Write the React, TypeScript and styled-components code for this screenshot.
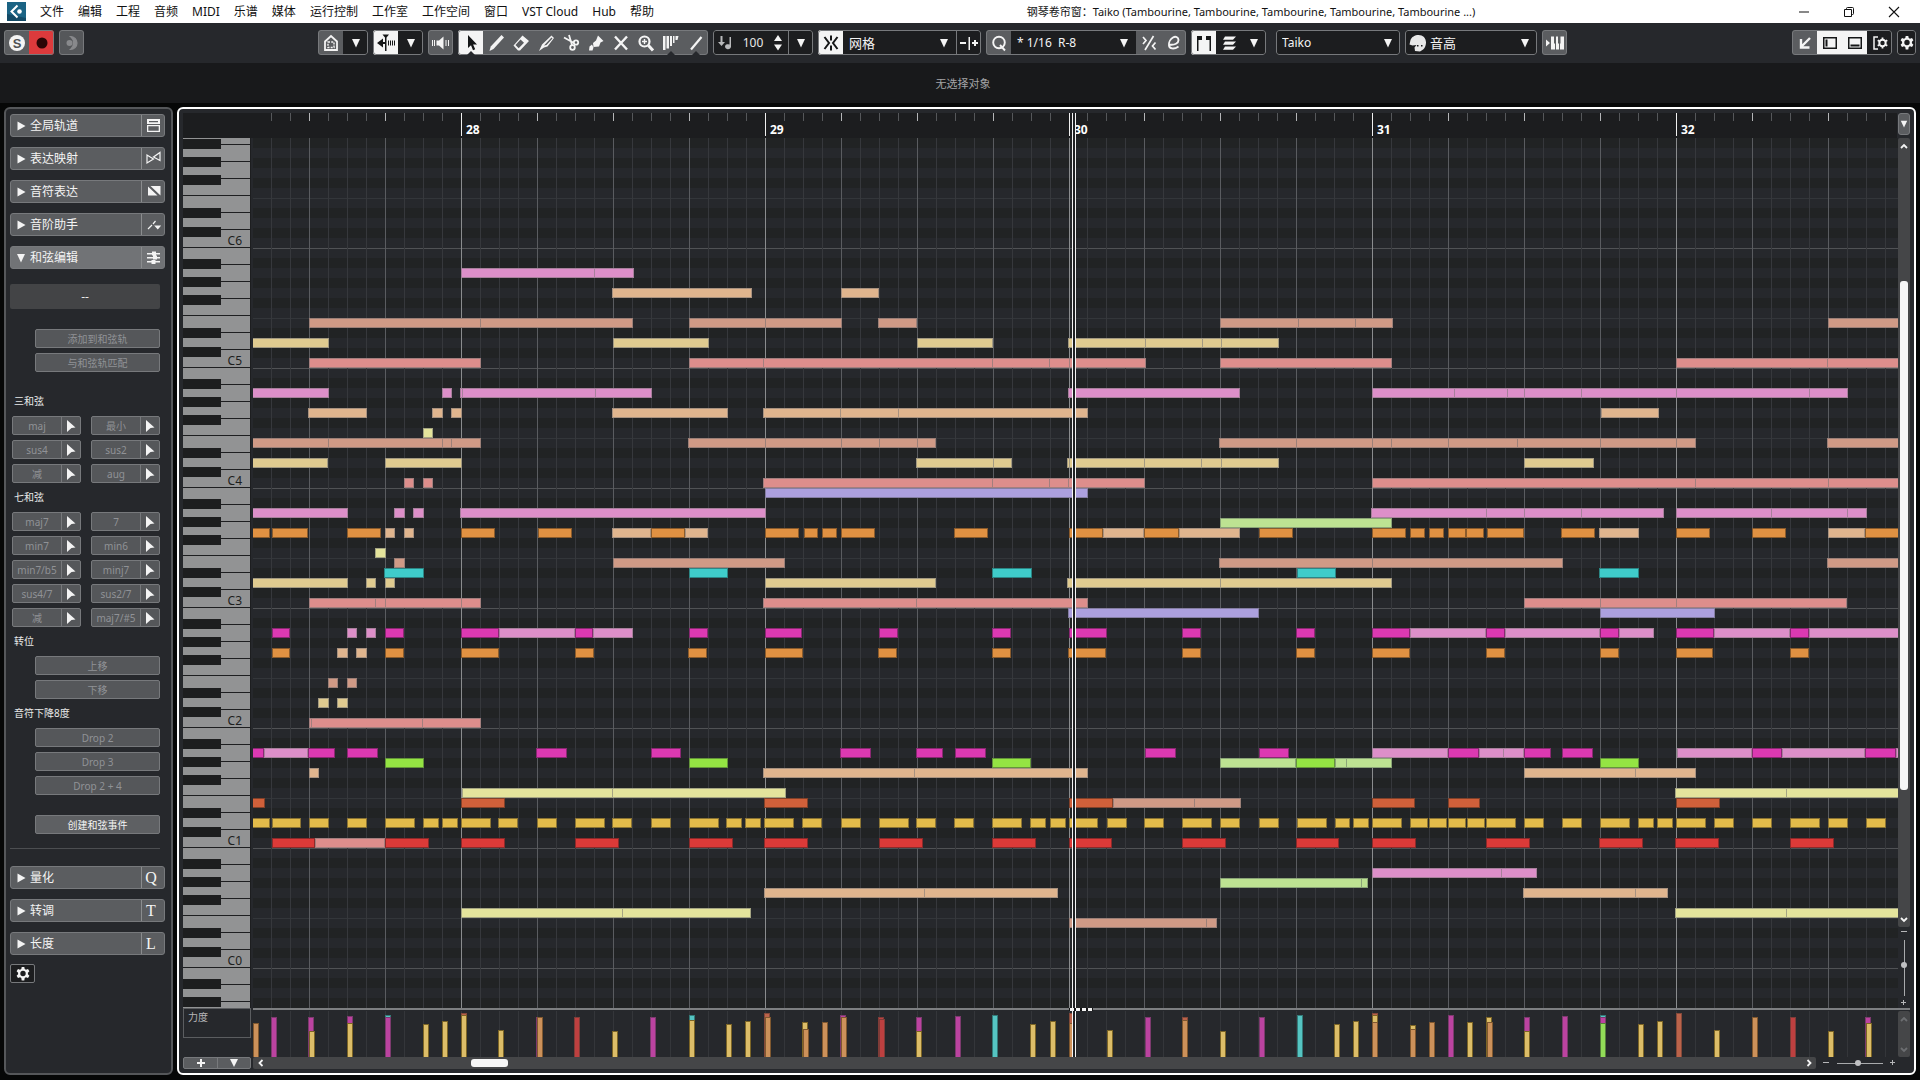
import React from 'react';
import styled, { createGlobalStyle, css } from 'styled-components';

/* ---------- theme ---------- */

const c = {
  panel: '#26282c',
  dark: '#1c1d1f',
  info: '#18191b',
  button: '#5b5d60',
  line: '#77797c',
  light: '#f4f4f4',
  text: '#e8e8e8',
  muted: '#909296',
  track: '#454648',
};

const GlobalStyle = createGlobalStyle`
  *, *::before, *::after { box-sizing: border-box; }
  body {
    margin: 0;
    background: #060707;
    color: ${c.text};
    font: 12px/16px "Noto Sans", "Noto Sans CJK SC", sans-serif;
  }
  button, input, select { font: inherit; color: inherit; margin: 0; }
  button { padding: 0; border: 0; background: none; cursor: default; }
`;

/* ---------- song data ---------- */

/* Timeline position of the left edge of the visible range, in timeline pixels. */
const VIEW_START = 253;
const BAR_28 = 461;
const STEP = 303.75 / 16;
const ROW = 10;
const LANE_BOTTOM = 1057;
const PLAYHEAD = 1072;

const noteColors: Record<string, [string, string]> = {
  P: ['#dd8fc9', '#a8809c'],
  A: ['#e0b58e', '#a89280'],
  S: ['#d09a86', '#9c8078'],
  Y: ['#e0cb90', '#a39a82'],
  R: ['#dd8e8c', '#a37f7e'],
  M: ['#dc39b2', '#8a2872'],
  O: ['#e09142', '#8a5b2c'],
  C: ['#3fccca', '#2b8685'],
  L: ['#aca0de', '#857ea3'],
  G: ['#bde292', '#8ba578'],
  B: ['#94e443', '#64953a'],
  W: ['#e4e49c', '#a5a583'],
  K: ['#d0603a', '#824129'],
  D: ['#e3bb4a', '#8b7434'],
  E: ['#dc3a38', '#8c2a2a'],
};

/* Row number and its notes: a colour letter, then the start of each note and the end of the last. */
const noteRows: [number, string][] = [
  [13, 'P461-594-634'],
  [15, 'A612-752 A841-879'],
  [18, 'S309-480-633 S689-765-842 S878-917 S1220-1298-1355-1393 S1828-2000'],
  [20, 'Y240-329 Y613-709 Y917-993 Y1068-1145-1202-1221-1279'],
  [22, 'R309-481 R689-763-992-1049-1069-1146 R1220-1392 R1676-1827-2000'],
  [25, 'P240-329 P442-452 P460-462-595-652 P1068-1240 P1372-1454-1507-1524-1581-1676-1809-1848'],
  [27, 'A308-367 A432-443 A451-462 A612-728 A763-840-898-1088 A1601-1659'],
  [29, 'W423-433'],
  [30, 'S240-328-442-451-481 S688-765-841-879-917-936 S1219-1296-1372-1391-1448-1517-1600-1676-1696 S1827-2000'],
  [32, 'Y240-328 Y385-462 Y916-993-1012 Y1067-1069-1144-1201-1221-1279 Y1524-1594'],
  [34, 'R404-414 R423-433 R763-992-1049-1068-1145 R1372-1695-1828-2000'],
  [35, 'L765-1088'],
  [37, 'P240-348 P394-405 P413-424 P460-766 P1371-1486-1524-1581-1664 P1676-1771-1847-1867'],
  [38, 'G1220-1392'],
  [39, 'O240-270 O272-308 O347-381 A385-395 A404-414 O461-495 O538-572 A612-651 O651-685 A685-708 O765-799 O804-818 O822-837 O841-875 O954-988 O1069-1103 A1103-1144 O1144-1179 A1179-1240 O1259-1293 O1372-1406 O1410-1425 O1429-1444 O1448-1466 O1466-1484 O1487-1524 O1561-1595 A1599-1639 O1676-1710 O1752-1786 A1828-1865 O1865-2000'],
  [41, 'W375-386'],
  [42, 'S394-405 S613-785 S1219-1372-1563 S1827-2000'],
  [43, 'C384-424 C689-728 C992-1032 C1297-1336 C1599-1639'],
  [44, 'Y240-348 Y366-376 Y385-395 Y765-936 Y1067-1220-1392'],
  [46, 'R309-375-385-461-481 R763-916-1088 R1524-1600-1676-1847'],
  [47, 'L1068-1259 L1600-1715'],
  [49, 'M272-290 P347-357 P366-376 M385-404 M461-499 P499-575 M575-593 P593-633 M689-708 M765-802 M879-898 M992-1011 M1069-1107 M1182-1201 M1296-1315 M1372-1410 P1410-1486 M1486-1505 P1505-1600 M1600-1619 P1619-1654 M1676-1714 P1714-1790 M1790-1809 P1809-2000'],
  [51, 'O272-290 A337-348 A356-367 O385-404 O461-499 O575-594 O688-707 O765-803 O878-897 O992-1011 O1068-1106 O1182-1201 O1296-1315 O1372-1410 O1486-1505 O1600-1619 O1676-1713 O1790-1809'],
  [54, 'S328-338 S347-357'],
  [56, 'Y318-329 Y337-348'],
  [58, 'R309-311-422-481'],
  [61, 'M240-264 P264-308 M308-335 M347-378 M536-567 M651-681 M840-871 M916-943 M955-986 M1145-1176 M1259-1289 P1372-1448 M1448-1479 P1479-1503-1524 M1524-1551 M1562-1593 P1677-1752 M1752-1782 P1782-1865 M1865-1896 P1896-2000'],
  [62, 'B385-424 B689-728 B992-1031 G1220-1296 B1296-1335 G1335-1346-1392 B1600-1639'],
  [63, 'A309-319 A763-914-1088 A1524-1635-1696'],
  [65, 'W462-612-786 W1675-1786-2000'],
  [66, 'K240-265 K461-505 K764-808 K1069-1113 S1113-1194-1241 K1372-1415 K1448-1480 K1676-1720'],
  [68, 'D240-270 D272-301 D309-329 D347-367 D385-415 D423-439 D442-458 D461-491 D498-518 D537-557 D575-605 D612-632 D651-671 D689-719 D726-742 D745-761 D764-794 D802-822 D841-861 D879-909 D916-936 D954-974 D992-1022 D1030-1046 D1050-1066 D1069-1098 D1107-1127 D1144-1164 D1182-1212 D1220-1240 D1259-1279 D1297-1327 D1335-1350 D1353-1369 D1372-1402 D1410-1428 D1429-1447 D1448-1466 D1467-1485 D1486-1516 D1524-1544 D1562-1582 D1600-1630 D1638-1654 D1657-1673 D1676-1706 D1714-1734 D1752-1772 D1790-1820 D1828-1848 D1866-1886'],
  [70, 'E272-315 R315-385 E385-429 E461-505 E575-619 E689-733 E764-808 E879-923 E992-1036 E1069-1112 E1182-1226 E1296-1339 E1372-1416 E1486-1530 E1599-1643 E1675-1719 E1790-1834'],
  [73, 'P1372-1501-1537'],
  [74, 'G1220-1361-1368'],
  [75, 'A764-924-1058 A1523-1635-1668'],
  [77, 'W461-622-751 W1675-1786-2000'],
  [78, 'S1069-1206-1217'],
];

/* A note that runs into the next one overlaps it by its border, so that a single line divides them. */
const notes = noteRows.flatMap(([row, line]) =>
  line.split(' ').flatMap((token) => {
    const edges = token.slice(1).split('-').map(Number);
    return edges.slice(1).map((end, i) => {
      const last = i === edges.length - 2;
      return { row, color: token[0], start: edges[i], width: end - edges[i] + (last ? 0 : 1) };
    });
  }),
);

const laneColors: Record<string, [string, string]> = {
  O: ['#cc915a', '#80582f'],
  M: ['#bb43a0', '#7c3a6e'],
  D: ['#dcbd68', '#7c6526'],
  E: ['#bd4040', '#7f3c38'],
  K: ['#bb634a', '#84493a'],
  C: ['#55c4c2', '#337a78'],
  B: ['#92dc58', '#55803a'],
};

/* Colour letter, position and top of each velocity bar; later bars lie over earlier ones. */
const velocities =
  'O253,1023 M271,1017 M308,1017 D309,1031 M347,1016 D347,1023 C385,1015 M385,1017 D423,1024 D442,1021 K461,1013 D461,1015 D498,1030 M536,1017 O537,1017 E574,1017 D612,1031 M650,1017 C689,1015 D689,1020 D726,1024 D745,1021 K764,1013 O765,1017 D802,1022 O803,1029 O822,1022 M840,1015 O841,1017 E878,1017 E879,1019 M916,1017 D916,1031 M955,1016 C992,1015 D1030,1024 D1050,1021 K1069,1013 O1069,1023 D1107,1030 M1145,1017 K1182,1017 O1182,1020 D1220,1031 M1259,1017 C1297,1015 D1334,1024 D1353,1021 K1372,1013 D1372,1015 O1372,1022 D1410,1025 O1410,1029 O1429,1022 M1448,1015 D1467,1022 D1486,1017 O1487,1022 M1524,1017 D1524,1031 M1562,1016 C1600,1015 M1600,1017 B1600,1023 D1638,1024 D1657,1021 K1676,1013 D1714,1030 O1752,1017 E1790,1017 D1828,1031 M1865,1017 D1866,1023'
    .split(' ')
    .map((token) => {
      const [x, top] = token.slice(1).split(',').map(Number);
      return { color: token[0], x, top };
    });

const gridLines = Array.from({ length: 86 }, (_, i) => {
  const n = i - 10;
  const kind = n % 16 === 0 ? 'bar' : n % 4 === 0 ? 'beat' : 'step';
  return { x: Math.round(BAR_28 + n * STEP) - VIEW_START, kind, bar: 28 + n / 16 };
});

/* ---------- shared parts ---------- */

const Svg = styled.svg<{ $w?: number; $h?: number }>`
  display: block;
  flex: none;
  width: ${(p) => p.$w ?? 20}px;
  height: ${(p) => p.$h ?? 20}px;
`;

type IconProps = { children: React.ReactNode; w?: number; h?: number };
const Icon = ({ children, w = 20, h = 20 }: IconProps) => (
  <Svg $w={w} $h={h} viewBox={`0 0 ${w} ${h}`} fill="currentColor" stroke="none" aria-hidden="true">
    {children}
  </Svg>
);

const Down = () => (
  <Icon w={10} h={10}>
    <path d="M1 1h8L5 9.500z" />
  </Icon>
);
const Right = () => (
  <Icon w={10} h={10}>
    <path d="M1.500 .5v9L9.500 5z" />
  </Icon>
);
const Gear = () => (
  <Icon w={14} h={14}>
    <path
      fillRule="evenodd"
      d="M5.700 0h2.600l.4 2 1.300.8 2-.8 1.400 2.300-1.500 1.400v1.600l1.500 1.400L12 11l-2-.8-1.300.8-.4 2.500H5.700L5.300 11 4 10.200 2 11 .6 8.700l1.500-1.400V5.700L.6 4.300 2 2l2 .8L5.300 2zM7 3.800a2.700 2.700 0 1 0 0 5.400 2.700 2.700 0 0 0 0-5.400z"
    />
  </Icon>
);

/* ---------- menu bar ---------- */

const Page = styled.div`
  display: grid;
  grid-template-columns: minmax(0, 1fr);
  grid-template-rows: 23px 40px 40px minmax(0, 1fr);
  height: 100vh;
  min-height: 1000px;
`;

const MenuBar = styled.header`
  display: flex;
  align-items: center;
  justify-content: space-between;
  padding: 0 20px 0 7px;
  background: #fff;
  color: #111;
`;

const Menus = styled.nav`
  display: flex;
  align-items: center;
  gap: 14px;
`;

const MenuButton = styled.button`
  height: 22px;
  white-space: nowrap;
`;

const WindowTitle = styled.h1`
  margin: 0 0 0 50px;
  font-size: 11px;
  font-weight: 400;
  white-space: nowrap;
`;

const WindowButtons = styled.div`
  display: flex;
  gap: 33px;
`;

const menus = ['文件', '编辑', '工程', '音频', 'MIDI', '乐谱', '媒体', '运行控制', '工作室', '工作空间', '窗口', 'VST Cloud', 'Hub', '帮助'];

const Logo = () => (
  <Svg $w={19} $h={19} viewBox="0 0 19 19" aria-hidden="true">
    <rect width="19" height="19" fill="#1b6384" />
    <path d="M0 12l19 4v3H0z" fill="#134a66" />
    <path d="M10.500 3.500L4.500 9.500l6 6" fill="none" stroke="#fff" strokeWidth="2" />
    <circle cx="12.500" cy="9.500" r="2.300" fill="#fff" />
  </Svg>
);

/* ---------- toolbar ---------- */

const Toolbar = styled.div`
  display: flex;
  align-items: flex-start;
  justify-content: space-between;
  padding: 7px 4px 0;
  background: ${c.panel};
`;

const ToolbarPart = styled.div<{ $indent?: boolean }>`
  display: flex;
  gap: 5px;
  margin-left: ${(p) => (p.$indent ? 9 : 0)}px;
`;

const Group = styled.div<{ $width?: number; $gapBefore?: boolean }>`
  display: flex;
  position: relative;
  width: ${(p) => (p.$width ? `${p.$width}px` : 'auto')};
  height: 25px;
  margin-left: ${(p) => (p.$gapBefore ? 5 : 0)}px;
  background: ${c.dark};
  border-radius: 3px;
  overflow: hidden;
  &::after {
    content: '';
    position: absolute;
    inset: 0;
    border: 1px solid ${c.line};
    border-radius: 3px;
    pointer-events: none;
  }
`;

const tones = {
  grey: css`background: ${c.button}; color: ${c.light};`,
  dark: css`background: ${c.dark}; color: ${c.light};`,
  white: css`background: ${c.light}; color: #151617;`,
  red: css`background: #dc3a3c; color: #2a0606;`,
  off: css`background: #55575a; color: #88898c;`,
};

const ToolButton = styled.button<{ $tone?: keyof typeof tones; $width?: number; $divided?: boolean; $marked?: boolean }>`
  display: flex;
  flex: none;
  align-items: center;
  justify-content: center;
  position: relative;
  width: ${(p) => p.$width ?? 25}px;
  height: 25px;
  border-left: ${(p) => (p.$divided ? `1px solid ${c.line}` : '0')};
  ${(p) => tones[p.$tone ?? 'grey']}
  ${(p) =>
    p.$marked &&
    css`
      &::after {
        content: '';
        position: absolute;
        z-index: 1;
        bottom: 0;
        left: 9px;
        border: solid transparent;
        border-width: 0 4px 4px;
        border-bottom-color: ${c.panel};
      }
    `}
`;

const SelectBox = styled.div`
  display: flex;
  align-items: center;
  position: relative;
  flex: 1;
  color: ${c.light};
  svg {
    position: absolute;
    right: 7px;
    pointer-events: none;
  }
`;

const Select = styled.select<{ $indent?: number; $small?: boolean }>`
  appearance: none;
  width: 100%;
  height: 25px;
  padding: 0 20px 0 ${(p) => p.$indent ?? 6}px;
  border: 0;
  background: transparent;
  color: ${c.light};
  font-size: ${(p) => (p.$small ? 12 : 13)}px;
  white-space: pre;
`;

const VelocityInput = styled.input`
  width: 30px;
  height: 25px;
  padding: 0;
  border: 0;
  background: transparent;
  text-align: center;
`;

const Fill = styled.span<{ $width: number }>`
  display: flex;
  flex: none;
  align-items: center;
  justify-content: center;
  width: ${(p) => p.$width}px;
`;

const SelectLead = styled.span`
  display: flex;
  align-items: center;
  flex: none;
  padding-left: 4px;
`;

const tools: { name: string; marked?: boolean; icon: React.ReactNode }[] = [
  { name: '对象选择', marked: true, icon: <path d="M7 2v13l3-2.800 2 5 2.200-1-2.100-4.700H16z" /> },
  { name: '绘制', icon: <path d="M15.500 2l2.500 2.500L7.500 16 3.500 18l1.200-4.500z" /> },
  { name: '擦除', icon: <path fillRule="evenodd" d="M11.500 2.500L18 8 9 17.500H7L2.500 12.500zM9.500 6.500L4.500 12l3.200 3.300 5.300-5.500z" /> },
  { name: '修剪', icon: <path fillRule="evenodd" d="M15.500 2.500L18 5l-6.500 8.500L8 14.500l-5 3.500 3-6.500zM15.500 4.500L8 12.500l2.500-.5 6-6.500z" /> },
  {
    name: '分割',
    icon: (
      <g fill="none" stroke="currentColor" strokeWidth="1.800">
        <path d="M3 4.500l10 5.500M8 2l3 10" />
        <circle cx="15" cy="9.500" r="2.200" />
        <circle cx="11.500" cy="14.500" r="2.300" />
      </g>
    ),
  },
  { name: '粘合', icon: <path d="M12 2.500l5.500 5.500-3 1.500-1.500 4-5.500.5-.5-4 3-2.500zM3.500 13.500l2.500-2 1.500 3-1 3H3z" /> },
  { name: '静音', icon: <path d="M4 3.500l12 13M16 3.500l-12 13" stroke="currentColor" strokeWidth="2.400" /> },
  {
    name: '缩放',
    icon: (
      <g fill="none" stroke="currentColor">
        <circle cx="8.500" cy="8.500" r="5" strokeWidth="2.200" />
        <path d="M12.500 12.500L17 17.500" strokeWidth="3" />
        <path d="M6 8.500h5M8.500 6v5" strokeWidth="1.400" />
      </g>
    ),
  },
  { name: '时间扭曲', marked: true, icon: <path d="M2 3h2.500v14H2zM5.500 3h2.500v12.500H5.500zM9 3h2v10H9zM12 3h1.500v7H12zM14.500 3h3l-1 4h-2z" /> },
  { name: '直线', marked: true, icon: <path d="M15.500 4L5 16.500" stroke="currentColor" strokeWidth="2.200" /> },
];

const TopToolbar = () => (
  <Toolbar>
    <ToolbarPart>
      <Group>
        <ToolButton aria-label="独奏编辑器">
          <Icon>
            <circle cx="10" cy="10" r="8" />
            <text x="10" y="14.500" textAnchor="middle" fontSize="13" fontWeight="700" fill="#505255" fontFamily="Liberation Sans, sans-serif">
              S
            </text>
          </Icon>
        </ToolButton>
        <ToolButton $tone="red" aria-label="在编辑器中录音">
          <Icon>
            <circle cx="10" cy="10" r="5.500" />
          </Icon>
        </ToolButton>
      </Group>
      <Group>
        <ToolButton $tone="off" aria-label="回溯录音">
          <Icon>
            <circle cx="7.500" cy="10" r="3" />
            <path d="M8.500 3.500a6.500 6.500 0 0 1 0 13c4-3 4-10 0-13z" stroke="currentColor" strokeWidth="1.200" />
          </Icon>
        </ToolButton>
      </Group>
    </ToolbarPart>

    <ToolbarPart $indent>
      <Group>
        <ToolButton aria-label="定义静态视图">
          <Icon>
            <path d="M4 8.500L10 3l6 5.500V17H4z" fill="none" stroke="currentColor" strokeWidth="1.800" />
            <path d="M7 9h6v5.500H7z" fill="none" stroke="currentColor" strokeWidth="1.400" strokeDasharray="2 1.200" />
          </Icon>
        </ToolButton>
        <ToolButton $tone="dark" aria-label="视图选项">
          <Down />
        </ToolButton>
      </Group>
      <Group>
        <ToolButton $tone="white" aria-label="自动滚动">
          <Icon>
            <path d="M1 10l6-4.500v9zM6 9h3v2H6zM9 3h1.500v15H9zM6.500 1.500h6.500L9.800 5.500zM12 7.500h1v5h-1zM14 7.500h1v5h-1zM16 7.500h1v5h-1zM18 7.500h1v5h-1z" />
          </Icon>
        </ToolButton>
        <ToolButton $tone="dark" aria-label="自动滚动设置">
          <Down />
        </ToolButton>
      </Group>
      <Group>
        <ToolButton aria-label="音响反馈">
          <Icon>
            <path d="M5.500 7.500H8L12.500 3.500v13L8 12.500H5.500zM1 7h1v6H1zM3 7h1v6H3zM14.500 7h1v6h-1zM17 7h1v6h-1z" />
          </Icon>
        </ToolButton>
      </Group>
      <Group>
        {tools.map((t, i) => (
          <ToolButton key={t.name} $tone={i === 0 ? 'white' : 'grey'} $marked={t.marked} aria-label={t.name}>
            <Icon>{t.icon}</Icon>
          </ToolButton>
        ))}
      </Group>
      <Group $width={100}>
        <Fill $width={25}>
          <Icon>
            <path d="M4.500 3h2v6h2.500l-3.500 4L2 9h2.500z" fill="#b9babc" />
            <path d="M13.500 4h1.500v9.500a3 2.500 0 1 1-1.500-2z" fill="#b9babc" />
          </Icon>
        </Fill>
        <VelocityInput aria-label="插入力度" defaultValue="100" />
        <ToolButton $tone="dark" $width={20} aria-label="调整力度">
          <Icon w={10} h={18}>
            <path d="M1 7l4-6 4 6zM1 10.500h8L5 16.500z" />
          </Icon>
        </ToolButton>
        <ToolButton $tone="dark" $divided aria-label="力度预设">
          <Down />
        </ToolButton>
      </Group>
      <Group $width={163}>
        <ToolButton $tone="white" aria-label="吸附">
          <Icon>
            <path d="M9 2.500h2v5H9zM9 12.500h2v5H9z" />
            <path d="M3.500 4L8 10l-4.500 6M16.500 4L12 10l4.500 6" fill="none" stroke="currentColor" strokeWidth="2" />
          </Icon>
        </ToolButton>
        <SelectBox>
          <Select aria-label="吸附类型">
            <option>网格</option>
          </Select>
          <Down />
        </SelectBox>
        <ToolButton $tone="dark" $divided aria-label="相对网格">
          <Icon>
            <path d="M1 9h6v2H1zM9.500 4h1.500v13H9.500zM13 9h6v2h-6zM15 7h2v6h-2z" />
          </Icon>
        </ToolButton>
      </Group>
      <Group $width={200}>
        <ToolButton aria-label="应用量化">
          <Icon>
            <circle cx="10" cy="9.500" r="5.800" fill="none" stroke="currentColor" strokeWidth="1.900" />
            <path d="M11 12l5 5.500" stroke="currentColor" strokeWidth="1.900" />
          </Icon>
        </ToolButton>
        <SelectBox>
          <Select aria-label="量化预设" $small>
            <option>* 1/16&nbsp; R-8</option>
          </Select>
          <Down />
        </SelectBox>
        <ToolButton aria-label="柔和量化">
          <Icon>
            <path d="M14.500 3L6 17M4 4l3 3.500L4 11M16.500 9.500L13.500 13l3 3.500" fill="none" stroke="currentColor" strokeWidth="1.700" />
          </Icon>
        </ToolButton>
        <ToolButton aria-label="打开量化面板">
          <Icon>
            <path d="M5 11.500c6 1 9.500-1.500 9.500-4.500 0-3-3-4-5.500-2.500S4.500 9.500 5 12.500s4.500 4.500 9.500 1" fill="none" stroke="currentColor" strokeWidth="1.900" />
          </Icon>
        </ToolButton>
      </Group>
      <Group>
        <ToolButton $tone="white" aria-label="显示片段边界">
          <Icon>
            <path d="M3 3h5v4H4.500v11H3zM17 3h-5v4h3.500v11H17z" />
          </Icon>
        </ToolButton>
        <ToolButton $tone="dark" aria-label="编辑激活片段">
          <Icon>
            <path d="M6 3.500h11l-3 3.200H4zM6 8.500h11l-3 3.200H4zM6 13.500h11l-3 3.200H4z" />
          </Icon>
        </ToolButton>
        <ToolButton $tone="dark" aria-label="片段选项">
          <Down />
        </ToolButton>
      </Group>
      <Group $width={124} $gapBefore>
        <SelectBox>
          <Select aria-label="当前片段" $small>
            <option>Taiko</option>
          </Select>
          <Down />
        </SelectBox>
      </Group>
      <Group $width={132}>
        <SelectLead>
          <Icon w={18} h={18}>
            <path fillRule="evenodd" d="M9.500 1C14 1 17 4 17 8.500S14.500 16 11 17.500L6 17l-.5-3.500 2-2.500-4 .5L.5 10.500 1.500 6C2.500 3 6 1 9.500 1zM8 11v1.500h1.500V11zM12 11v1.500h1.500V11z" />
          </Icon>
        </SelectLead>
        <SelectBox>
          <Select aria-label="事件颜色" $indent={3}>
            <option>音高</option>
          </Select>
          <Down />
        </SelectBox>
      </Group>
      <Group>
        <ToolButton aria-label="MIDI 输入">
          <Icon>
            <path d="M1 6.500v7l4-3.500zM6 3.500h3v7h1v6H6zM11 3.500h2v7h1v6h-3v-6zM15.500 3.500H19v13h-4v-6h.5z" />
          </Icon>
        </ToolButton>
      </Group>
    </ToolbarPart>

    <ToolbarPart>
      <Group $width={100}>
        <ToolButton aria-label="在下部区域打开">
          <Icon>
            <path d="M15 5L7 13M6 6v8.500h8.500" fill="none" stroke="currentColor" strokeWidth="2.400" />
          </Icon>
        </ToolButton>
        <ToolButton $tone="white" aria-label="显示左侧区域">
          <Icon>
            <path fillRule="evenodd" d="M3 4h14v12H3zM4.500 5.500v9h11v-9zM5.500 6.500h2v7h-2z" />
          </Icon>
        </ToolButton>
        <ToolButton $tone="white" aria-label="显示下部区域">
          <Icon>
            <path fillRule="evenodd" d="M3 4h14v12H3zM4.500 5.500v9h11v-9zM5.500 11.500h9v2h-9z" />
          </Icon>
        </ToolButton>
        <ToolButton $tone="dark" aria-label="设置窗口布局">
          <Icon>
            <path d="M8 4H4v12h4" fill="none" stroke="currentColor" strokeWidth="1.500" />
            <circle cx="12.500" cy="10" r="3.200" fill="none" stroke="currentColor" strokeWidth="2" />
            <path d="M12.500 4.500v2M12.500 13.500v2M7.700 7.200l1.800 1M15.500 11.800l1.800 1M7.700 12.800l1.800-1M15.500 8.200l1.800-1" stroke="currentColor" strokeWidth="1.800" />
          </Icon>
        </ToolButton>
      </Group>
      <Group $width={19}>
        <ToolButton $tone="dark" $width={19} aria-label="设置工具栏">
          <Gear />
        </ToolButton>
      </Group>
    </ToolbarPart>
  </Toolbar>
);

const InfoLine = styled.div`
  display: flex;
  align-items: center;
  justify-content: center;
  padding: 2px 0 0 6px;
  background: ${c.info};
  color: #a4a5a7;
  font-size: 11px;
`;

/* ---------- inspector ---------- */

const Workspace = styled.main`
  display: grid;
  grid-template-columns: 169px minmax(0, 1fr);
  gap: 4px;
  min-height: 0;
  padding: 4px 4px 5px;
`;

const Inspector = styled.aside`
  border: 2px solid #55575a;
  border-radius: 6px;
  padding: 5px 6px 0 4px;
  background: ${c.panel};
  overflow: hidden;
`;

const Sections = styled.div`
  display: grid;
  gap: 10px;
`;

const SectionButton = styled.button<{ $open?: boolean }>`
  display: grid;
  grid-template-columns: 14px 1fr 23px;
  align-items: center;
  height: 23px;
  border: 1px solid ${c.line};
  border-radius: 3px;
  background: ${(p) => (p.$open ? '#717376' : c.button)};
  color: ${c.light};
  text-align: left;
  padding-left: 5px;
`;

const SectionMark = styled.span<{ $letter?: boolean }>`
  display: flex;
  align-items: center;
  justify-content: center;
  height: 21px;
  border-left: 1px solid #8a8c8e;
  ${(p) => p.$letter && css`font: 16px/20px "Liberation Serif", serif; padding-right: 4px;`}
`;

const ChordBody = styled.div`
  padding: 15px 5px 17px 0;
`;

const ChordName = styled.output`
  display: block;
  height: 25px;
  border-radius: 2px;
  background: #434446;
  line-height: 25px;
  text-align: center;
`;

const Stack = styled.div<{ $top?: number }>`
  display: grid;
  gap: 5px;
  margin: ${(p) => p.$top ?? 0}px 0 0 25px;
`;

const PanelButton = styled.button<{ $active?: boolean }>`
  height: 19px;
  border: 1px solid ${c.line};
  border-radius: 2px;
  background: ${(p) => (p.$active ? '#5e6063' : '#55575a')};
  color: ${(p) => (p.$active ? c.light : c.muted)};
  font-size: 10px;
  line-height: 14px;
`;

const Heading = styled.h2<{ $top?: number }>`
  margin: ${(p) => p.$top ?? 7}px 0 7px 4px;
  font-size: 10px;
  font-weight: 400;
  line-height: 15px;
`;

const ChordGrid = styled.div`
  display: grid;
  grid-template-columns: 1fr 1fr;
  gap: 5px 10px;
  padding-left: 2px;
`;

const ChordPair = styled.div`
  display: grid;
  grid-template-columns: 1fr 19px;
  height: 19px;
  border: 1px solid ${c.line};
  border-radius: 2px;
  background: #55575a;
`;

const ChordButton = styled.button`
  color: ${c.muted};
  font-size: 10px;
  line-height: 14px;
`;

const AuditionButton = styled.button`
  display: flex;
  align-items: center;
  justify-content: center;
  border-left: 1px solid ${c.line};
  color: ${c.light};
`;

const Rule = styled.hr`
  margin: 14px 0 0;
  border: 0;
  border-top: 1px solid #4c4e51;
`;

const SettingsButton = styled.button`
  display: flex;
  align-items: center;
  justify-content: center;
  width: 25px;
  height: 19px;
  margin-top: 9px;
  border: 1px solid ${c.line};
  border-radius: 2px;
  background: ${c.dark};
  color: ${c.light};
`;

const sections: { name: string; open?: boolean; icon: React.ReactNode }[] = [
  { name: '全局轨道', icon: <path fillRule="evenodd" d="M1 1h13v5H1zM3 3v1.200h9V3zM1 7h13v7H1zM2.300 8.300v4.400h10.400V8.300z" /> },
  { name: '表达映射', icon: <path d="M1 4v8l6.500-4zM14 1.500v8L7.500 6z" fill="none" stroke="currentColor" strokeWidth="1.200" /> },
  { name: '音符表达', icon: <path d="M4.500 2h10v9.500zM2 2.500v9h9.500z" /> },
  { name: '音阶助手', icon: <path d="M2 12l2-2 2-2M7 7l2.500-3M9.500 9h4.500l-2.200 2.500z" stroke="currentColor" strokeWidth="1.200" /> },
  { name: '和弦编辑', open: true, icon: <path d="M1 3h13v1.500H1zM1 7h13v1.500H1zM1 11h13v1.500H1zM6 1.500h4v4H6zM7 5.500h4V9.500H7zM5.500 10h4v4h-4z" /> },
];

const Chords = ({ names }: { names: string[] }) => (
  <ChordGrid>
    {names.map((name, i) => (
      <ChordPair key={i}>
        <ChordButton>{name}</ChordButton>
        <AuditionButton aria-label={`选择 ${name}`}>
          <Icon w={10} h={12}>
            <path d="M1 0l8.500 7.500-4 .5L1 12z" />
          </Icon>
        </AuditionButton>
      </ChordPair>
    ))}
  </ChordGrid>
);

const InspectorPanel = () => (
  <Inspector>
    <Sections>
      {sections.map((s) => (
        <SectionButton key={s.name} $open={s.open} aria-expanded={!!s.open}>
          {s.open ? <Down /> : <Right />}
          {s.name}
          <SectionMark>
            <Icon w={15} h={15}>{s.icon}</Icon>
          </SectionMark>
        </SectionButton>
      ))}
    </Sections>
    <ChordBody>
      <ChordName>--</ChordName>
      <Stack $top={20}>
        <PanelButton>添加到和弦轨</PanelButton>
        <PanelButton>与和弦轨匹配</PanelButton>
      </Stack>
      <Heading $top={22}>三和弦</Heading>
      <Chords names={['maj', '最小', 'sus4', 'sus2', '减', 'aug']} />
      <Heading>七和弦</Heading>
      <Chords names={['maj7', '7', 'min7', 'min6', 'min7/b5', 'minj7', 'sus4/7', 'sus2/7', '减', 'maj7/#5']} />
      <Heading>转位</Heading>
      <Stack>
        <PanelButton>上移</PanelButton>
        <PanelButton>下移</PanelButton>
      </Stack>
      <Heading>音符下降8度</Heading>
      <Stack>
        <PanelButton>Drop 2</PanelButton>
        <PanelButton>Drop 3</PanelButton>
        <PanelButton>Drop 2 + 4</PanelButton>
      </Stack>
      <Stack $top={20}>
        <PanelButton $active>创建和弦事件</PanelButton>
      </Stack>
      <Rule />
    </ChordBody>
    <Sections>
      {[
        ['量化', 'Q'],
        ['转调', 'T'],
        ['长度', 'L'],
      ].map(([name, mark]) => (
        <SectionButton key={name} aria-expanded={false}>
          <Right />
          {name}
          <SectionMark $letter>{mark}</SectionMark>
        </SectionButton>
      ))}
    </Sections>
    <SettingsButton aria-label="设置检查器">
      <Gear />
    </SettingsButton>
  </Inspector>
);

/* ---------- editor ---------- */

const Editor = styled.section`
  display: grid;
  grid-template-columns: 68px minmax(0, 1fr) 12px;
  grid-template-rows: 25px minmax(0, 1fr) 3px 46px 12px;
  min-height: 0;
  padding: 4px;
  border: 2px solid #fff;
  border-radius: 6px;
  background: ${c.panel};
`;

const RulerCorner = styled.div`
  grid-area: 1 / 1;
  background: ${c.dark};
`;

const Ruler = styled.div`
  grid-area: 1 / 2;
  margin-right: 1px;
  overflow: hidden;
  background: ${c.dark};
`;

/* Lanes start two pixels right of the keyboard. */
const laneBox = css`
  position: relative;
  margin-left: 2px;
  overflow: hidden;
`;

const RulerTrack = styled.div`
  ${laneBox}
  height: 25px;
`;

const Tick = styled.div<{ $kind: string }>`
  position: absolute;
  top: 0;
  height: ${(p) => (p.$kind === 'bar' ? 23 : 8)}px;
  border-left: 1px solid ${(p) => (p.$kind === 'bar' ? '#f0f0f0' : p.$kind === 'beat' ? '#b4b6b8' : '#55575a')};
  color: #fff;
`;

const BarNumber = styled.span`
  display: block;
  padding: 9px 0 0 4px;
  font-weight: 700;
  line-height: 15px;
`;

const RulerButton = styled.button`
  display: flex;
  grid-area: 1 / 3;
  align-items: center;
  justify-content: center;
  height: 22px;
  border: 1px solid ${c.line};
  border-radius: 3px;
  background: ${c.button};
  color: ${c.light};
  svg { width: 8px; }
`;

const Keyboard = styled.div`
  grid-area: 2 / 1;
  overflow: hidden;
  border-right: 1px solid #1d1e20;
  background: #929394;
`;

/* The topmost octave is cut off by one row. */
const Octaves = styled.div`
  margin-top: -10px;
`;

const Octave = styled.div`
  display: flex;
  flex-direction: column;
  position: relative;
  height: 120px;
`;

const WhiteKey = styled.div<{ $label?: boolean }>`
  display: flex;
  flex: none;
  align-items: flex-end;
  justify-content: flex-end;
  height: ${(p) => (p.$label ? 18 : 17)}px;
  border-bottom: 1px solid #1d1e20;
  padding-right: 8px;
  color: #1d1e20;
  line-height: 12px;
`;

const BlackKey = styled.div`
  position: absolute;
  left: 0;
  width: 38px;
  height: 10px;
  background: #1d1e1f;
`;

const rowStops = 'wbwbwbwwbwbw'
  .split('')
  .map((k, i) => `${k === 'w' ? '#26282c' : '#212324'} ${i * 10}px ${i * 10 + 10}px`)
  .join(', ');

const Roll = styled.div`
  ${laneBox}
  grid-area: 2 / 2;
  background-position: 0 -10px;
  background-size: 100% 120px;
  background-image: linear-gradient(#505255 0 1px, transparent 1px 70px, #33363a 70px 71px, transparent 71px),
    linear-gradient(${rowStops});
`;

const GridLine = styled.div<{ $kind: string; $dim?: boolean }>`
  position: absolute;
  top: 0;
  bottom: 0;
  width: 1px;
  background: ${(p) => (p.$dim ? '#34363a' : p.$kind === 'bar' ? '#8a8c8e' : p.$kind === 'beat' ? '#5a5c60' : '#36383c')};
`;

const Note = styled.div<{ $color: string }>`
  position: absolute;
  height: 10px;
  border: 1px solid ${(p) => noteColors[p.$color][1]};
  background: ${(p) => noteColors[p.$color][0]};
`;

const Playhead = styled.div`
  position: relative;
  z-index: 2;
  grid-area: 1 / 2 / 5 / 3;
  width: 4px;
  margin-left: 2px;
  border: solid #f4f4f4;
  border-width: 0 1px;
  background: #202123;
`;

const Splitter = styled.div`
  grid-area: 3 / 2 / 4 / 4;
  height: 2px;
  margin-left: 2px;
  background: #7d7f81;
`;

const Grip = styled.div`
  position: relative;
  z-index: 3;
  width: 24px;
  height: 3px;
  background: repeating-linear-gradient(90deg, #f4f4f4 0 4px, #151617 4px 6px);
  border-left: 1px solid #151617;
`;

const LaneName = styled.div`
  grid-area: 3 / 1 / 5 / 2;
  z-index: 1;
  height: 30px;
  border: 1px solid #5b5d60;
  padding: 0 4px;
  color: #b6b7b9;
  font-size: 10px;
`;

const Lane = styled.div`
  ${laneBox}
  grid-area: 4 / 2;
`;

const VelocityBar = styled.div<{ $color: string }>`
  position: absolute;
  bottom: 0;
  width: 6px;
  border: solid ${(p) => laneColors[p.$color][1]};
  border-width: 1px 1px 0 1px;
  background: ${(p) => laneColors[p.$color][0]};
`;

const SideColumn = styled.div`
  display: flex;
  flex-direction: column;
  grid-area: 2 / 3;
  min-height: 0;
`;

const Track = styled.div<{ $row?: boolean }>`
  display: flex;
  flex: 1;
  flex-direction: ${(p) => (p.$row ? 'row' : 'column')};
  align-items: center;
  justify-content: space-between;
  min-height: 0;
  border-radius: 2px;
  background: ${c.track};
`;

const LaneTrack = styled(Track)`
  grid-area: 4 / 3;
`;

const ArrowButton = styled.button<{ $dim?: boolean; $wide?: boolean }>`
  display: flex;
  align-items: center;
  justify-content: center;
  flex: none;
  width: ${(p) => (p.$wide ? 15 : 12)}px;
  height: ${(p) => (p.$wide ? 12 : 16)}px;
  color: ${(p) => (p.$dim ? '#6c6e71' : c.light)};
`;

const ScrollArea = styled.div<{ $row?: boolean }>`
  display: flex;
  flex: 1;
  flex-direction: ${(p) => (p.$row ? 'row' : 'column')};
`;

const ThumbV = styled.div`
  width: 8px;
  height: 509px;
  margin-top: 127px;
  border-radius: 3px;
  background: #f6f6f6;
`;

const ThumbH = styled.div`
  width: 37px;
  height: 8px;
  margin-left: 203px;
  border-radius: 3px;
  background: #f6f6f6;
`;

const Zoom = styled.div<{ $row?: boolean }>`
  display: flex;
  flex: none;
  flex-direction: ${(p) => (p.$row ? 'row' : 'column')};
  align-items: center;
  justify-content: space-between;
  ${(p) => (p.$row ? 'width: 94px; padding: 0 12px 0 5px;' : 'height: 81px;')}
`;

const ZoomButton = styled.button`
  display: flex;
  align-items: center;
  justify-content: center;
  width: 10px;
  height: 10px;
  color: #b6b7b9;
`;

const Slider = styled.input<{ $vertical?: boolean }>`
  appearance: none;
  background: transparent;
  ${(p) => (p.$vertical ? 'writing-mode: vertical-lr; width: 8px; height: 56px;' : 'width: 46px; height: 8px;')}
  &::-webkit-slider-runnable-track {
    background: #a8aaac;
    ${(p) => (p.$vertical ? 'width: 1px; height: 100%;' : 'height: 1px; width: 100%;')}
  }
  &::-webkit-slider-thumb {
    appearance: none;
    width: 6px;
    height: 6px;
    border-radius: 3px;
    background: #c0c1c3;
    ${(p) => (p.$vertical ? 'margin-left: -3px;' : 'margin-top: -3px;')}
  }
`;

const LaneButtons = styled.div`
  display: grid;
  grid-template-columns: 1fr 1fr;
  grid-area: 5 / 1;
  border: 1px solid ${c.line};
  border-radius: 2px;
  background: ${c.button};
`;

const LaneButton = styled.button`
  display: flex;
  align-items: center;
  justify-content: center;
  color: ${c.light};
  & + & { border-left: 1px solid ${c.line}; }
`;

const BottomBar = styled.div`
  display: flex;
  grid-area: 5 / 2 / 6 / 4;
  margin-left: 2px;
`;

const arrows = {
  up: 'M1 6l3-3 3 3',
  down: 'M1 3l3 3 3-3',
  left: 'M5.500 1l-3 3 3 3',
  right: 'M2.500 1l3 3-3 3',
};

const Arrow = ({ to }: { to: keyof typeof arrows }) => (
  <Icon w={8} h={8}>
    <path d={arrows[to]} fill="none" stroke="currentColor" strokeWidth="1.800" />
  </Icon>
);

const Minus = () => (
  <Icon w={8} h={8}>
    <path d="M1 3h6v1H1z" />
  </Icon>
);
const Plus = () => (
  <Icon w={8} h={8}>
    <path d="M1 3h5v1H1zM3 1h1v5H3z" />
  </Icon>
);

const blackKeys = [11, 29, 47, 80, 99];

const PianoRoll = () => (
  <Editor aria-label="钢琴卷帘">
    <RulerCorner />
    <Ruler>
      <RulerTrack>
        {gridLines.map((l) => (
          <Tick key={l.x} $kind={l.kind} style={{ left: l.x }}>
            {l.kind === 'bar' && <BarNumber>{l.bar}</BarNumber>}
          </Tick>
        ))}
      </RulerTrack>
    </Ruler>
    <RulerButton aria-label="标尺格式">
      <Down />
    </RulerButton>

    <Keyboard>
      <Octaves>
        {[6, 5, 4, 3, 2, 1, 0, -1].map((o) => (
          <Octave key={o}>
            {['B', 'A', 'G', 'F', 'E', 'D'].map((k) => (
              <WhiteKey key={k} />
            ))}
            <WhiteKey $label>{o >= 0 ? `C${o}` : null}</WhiteKey>
            {blackKeys.map((top) => (
              <BlackKey key={top} style={{ top }} />
            ))}
          </Octave>
        ))}
      </Octaves>
    </Keyboard>
    <Roll>
      {gridLines.map((l) => (
        <GridLine key={l.x} $kind={l.kind} style={{ left: l.x }} />
      ))}
      {notes.map((n, i) => (
        <Note key={i} $color={n.color} style={{ left: n.start - VIEW_START, top: n.row * ROW, width: n.width }} />
      ))}
    </Roll>
    <SideColumn>
      <Track>
        <ArrowButton aria-label="向上滚动">
          <Arrow to="up" />
        </ArrowButton>
        <ScrollArea>
          <ThumbV />
        </ScrollArea>
        <ArrowButton aria-label="向下滚动">
          <Arrow to="down" />
        </ArrowButton>
      </Track>
      <Zoom>
        <ZoomButton aria-label="垂直缩小">
          <Minus />
        </ZoomButton>
        <Slider type="range" aria-label="垂直缩放" $vertical defaultValue={44} />
        <ZoomButton aria-label="垂直放大">
          <Plus />
        </ZoomButton>
      </Zoom>
    </SideColumn>

    <Playhead style={{ left: PLAYHEAD - VIEW_START }} />
    <Splitter>
      <Grip style={{ left: PLAYHEAD - VIEW_START - 3 }} />
    </Splitter>

    <LaneName>力度</LaneName>
    <Lane>
      {gridLines.map((l) => (
        <GridLine key={l.x} $kind={l.kind} $dim style={{ left: l.x }} />
      ))}
      {velocities.map((v, i) => (
        <VelocityBar key={i} $color={v.color} style={{ left: v.x - VIEW_START, height: LANE_BOTTOM - v.top }} />
      ))}
    </Lane>
    <LaneTrack>
      <ArrowButton $dim aria-label="控制器向上">
        <Arrow to="up" />
      </ArrowButton>
      <ArrowButton $dim aria-label="控制器向下">
        <Arrow to="down" />
      </ArrowButton>
    </LaneTrack>

    <LaneButtons>
      <LaneButton aria-label="添加控制器轨道">
        <Icon w={10} h={10}>
          <path d="M1 4h8v2H1zM4 1h2v8H4z" />
        </Icon>
      </LaneButton>
      <LaneButton aria-label="控制器预设">
        <Icon w={10} h={10}>
          <path d="M1 1h8L5 9z" />
        </Icon>
      </LaneButton>
    </LaneButtons>
    <BottomBar>
      <Track $row>
        <ArrowButton $wide aria-label="向左滚动">
          <Arrow to="left" />
        </ArrowButton>
        <ScrollArea $row>
          <ThumbH />
        </ScrollArea>
        <ArrowButton $wide aria-label="向右滚动">
          <Arrow to="right" />
        </ArrowButton>
      </Track>
      <Zoom $row>
        <ZoomButton aria-label="水平缩小">
          <Minus />
        </ZoomButton>
        <Slider type="range" aria-label="水平缩放" defaultValue={45} />
        <ZoomButton aria-label="水平放大">
          <Plus />
        </ZoomButton>
      </Zoom>
    </BottomBar>
  </Editor>
);

export default function App() {
  return (
    <>
      <GlobalStyle />
      <Page>
        <MenuBar>
          <Menus>
            <Logo />
            {menus.map((m) => (
              <MenuButton key={m}>{m}</MenuButton>
            ))}
          </Menus>
          <WindowTitle>钢琴卷帘窗：Taiko (Tambourine, Tambourine, Tambourine, Tambourine, Tambourine ...)</WindowTitle>
          <WindowButtons>
            <MenuButton aria-label="最小化">
              <Icon w={12} h={12}>
                <path d="M1 5.500h10v1H1z" />
              </Icon>
            </MenuButton>
            <MenuButton aria-label="还原">
              <Icon w={12} h={12}>
                <path d="M1.500 3.500h7v7h-7zM3.500 3.500v-1a1 1 0 0 1 1-1h5a1 1 0 0 1 1 1v5a1 1 0 0 1-1 1h-1" fill="none" stroke="currentColor" />
              </Icon>
            </MenuButton>
            <MenuButton aria-label="关闭">
              <Icon w={12} h={12}>
                <path d="M1 1l10 10M11 1L1 11" stroke="currentColor" strokeWidth="1.100" />
              </Icon>
            </MenuButton>
          </WindowButtons>
        </MenuBar>
        <TopToolbar />
        <InfoLine>无选择对象</InfoLine>
        <Workspace>
          <InspectorPanel />
          <PianoRoll />
        </Workspace>
      </Page>
    </>
  );
}
